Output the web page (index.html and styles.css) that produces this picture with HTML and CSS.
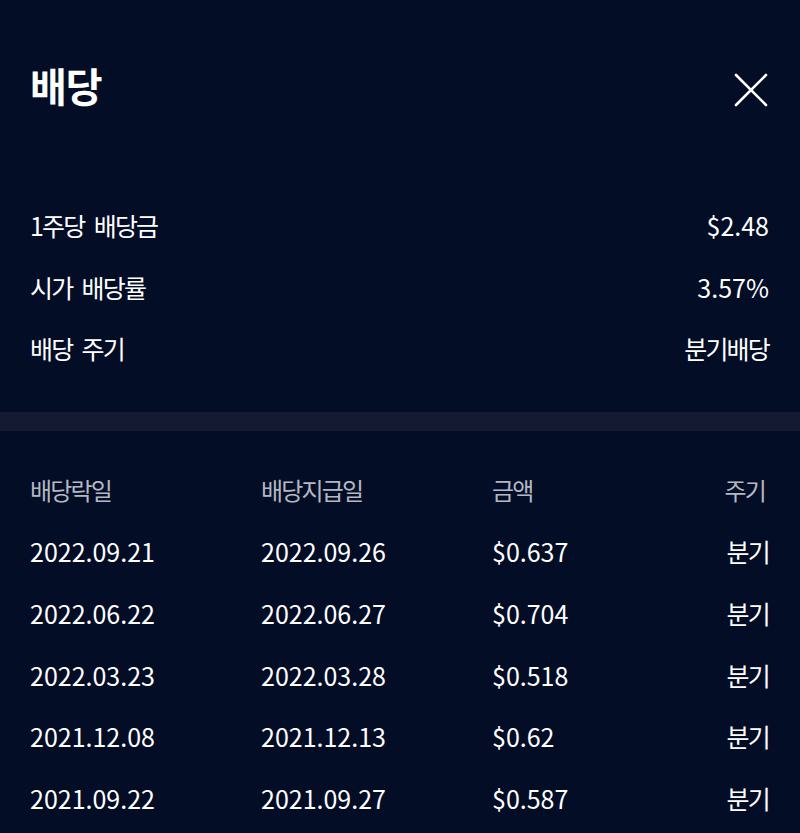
FILE: index.html
```html
<!DOCTYPE html>
<html lang="ko">
<head>
<meta charset="utf-8">
<link rel="stylesheet" href="styles.css">
</head>
<body>
<div class="page">
  <header class="head">
    <h1 class="title">배당</h1>
    <svg class="close" width="34" height="34" viewBox="0 0 34 34"><path d="M2 2L32 32M32 2L2 32" stroke="#fff" stroke-width="2.6" stroke-linecap="round"/></svg>
  </header>
  <section class="info">
    <div class="row"><span class="ko">1주당 배당금</span><span>$2.48</span></div>
    <div class="row"><span class="ko">시가 배당률</span><span>3.57%</span></div>
    <div class="row"><span class="ko">배당 주기</span><span class="ko">분기배당</span></div>
  </section>
  <div class="band"></div>
  <section class="table">
    <div class="trow th ko"><span>배당락일</span><span>배당지급일</span><span>금액</span><span class="r">주기</span></div>
    <div class="trow"><span>2022.09.21</span><span>2022.09.26</span><span>$0.637</span><span class="r ko">분기</span></div>
    <div class="trow"><span>2022.06.22</span><span>2022.06.27</span><span>$0.704</span><span class="r ko">분기</span></div>
    <div class="trow"><span>2022.03.23</span><span>2022.03.28</span><span>$0.518</span><span class="r ko">분기</span></div>
    <div class="trow"><span>2021.12.08</span><span>2021.12.13</span><span>$0.62</span><span class="r ko">분기</span></div>
    <div class="trow"><span>2021.09.22</span><span>2021.09.27</span><span>$0.587</span><span class="r ko">분기</span></div>
  </section>
</div>
</body>
</html>
```
FILE: styles.css
```css
html, body {
  margin: 0;
  padding: 0;
  background: #030d26;
}
body {
  font-family: "Noto Sans CJK KR", "Noto Sans", sans-serif;
  color: #ffffff;
  overflow: hidden;
}
.page {
  width: 800px;
  height: 833px;
}
.head {
  display: flex;
  justify-content: space-between;
  align-items: center;
  padding: 60px 32px 0 30px;
  height: 60px;
}
.title {
  margin: 0 0 10px 0;
  font-size: 40px;
  font-weight: 700;
  letter-spacing: -1px;
  line-height: 50px;
}
.close {
  display: block;
}
.info {
  padding: 88px 31px 0 30px;
  height: 292px;
  box-sizing: border-box;
}
.row {
  display: flex;
  justify-content: space-between;
  font-size: 25px;
  height: 61.5px;
  line-height: 34px;
}
.ko {
  letter-spacing: -1.8px;
  word-spacing: 4px;
}
.band {
  height: 19px;
  background: #131a31;
}
.table {
  padding: 42px 31px 0 30px;
}
.trow {
  display: grid;
  grid-template-columns: 231px 231px 1fr auto;
  font-size: 25px;
  height: 61.8px;
  line-height: 34px;
}
.trow.th {
  color: #b4b8c3;
  font-size: 24px;
  height: 61px;
}
.th .r { padding-right: 4px; }
```
